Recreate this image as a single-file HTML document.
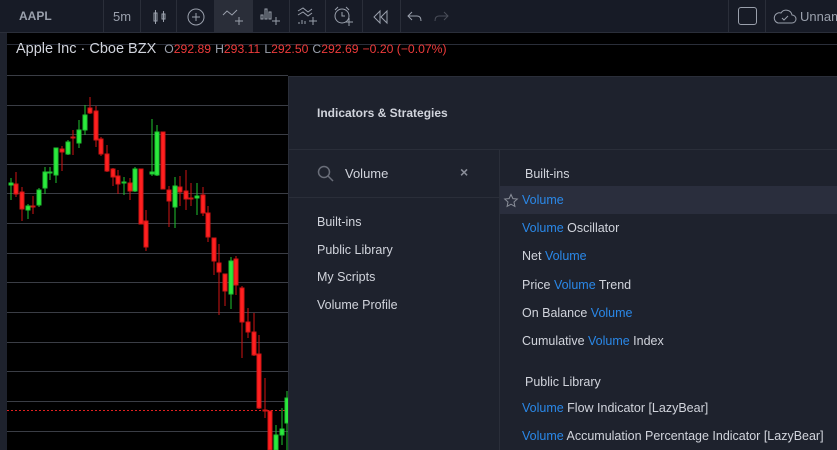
<!DOCTYPE html>
<html><head><meta charset="utf-8"><style>
*{margin:0;padding:0;box-sizing:border-box}
html,body{width:837px;height:450px;overflow:hidden}
body{background:#000;font-family:"Liberation Sans",sans-serif;position:relative}
.tb{position:absolute;left:0;top:0;width:837px;height:33px;background:#171b26;border-bottom:1px solid #2a2e39}
.sep{position:absolute;top:0;width:1px;height:33px;background:#2a2e39}
.tx{position:absolute;color:#9aa0ac;font-size:13px;top:9px}
.ls{position:absolute;left:0;top:33px;width:7px;height:417px;background:#1e222d}
.leg{position:absolute;left:16px;top:41px;font-size:14.5px;color:#d1d4dc;white-space:nowrap}
.leg .n{font-size:12.2px;color:#ef3b3b}
.leg .g{font-size:12.2px;color:#9aa0ac}
.dlg{position:absolute;left:288px;top:76px;width:549px;height:374px;background:#1e222d;border-left:1px solid #2a2e39;border-top:1px solid #2a2e39;overflow:hidden}
.t{position:absolute;color:#d1d4dc;font-size:12.5px;white-space:nowrap}
.b{color:#2a88e8}
</style></head><body>
<div class="tb">
<span class="tx" style="left:19px;font-weight:bold;font-size:12px">AAPL</span>
<div class="sep" style="left:103px"></div>
<span class="tx" style="left:113px">5m</span>
<div class="sep" style="left:140px"></div>
<svg style="position:absolute;left:150px;top:7px" width="20" height="20" stroke="#9aa0ac" fill="none"><rect x="4" y="6" width="3" height="8"/><line x1="5.5" y1="3" x2="5.5" y2="17"/><rect x="12" y="7" width="3" height="5"/><line x1="13.5" y1="4" x2="13.5" y2="15"/></svg>
<div class="sep" style="left:176px"></div>
<svg style="position:absolute;left:185px;top:6px" width="22" height="22" stroke="#9aa0ac" fill="none"><circle cx="11" cy="11" r="8"/><line x1="11" y1="7" x2="11" y2="15"/><line x1="7" y1="11" x2="15" y2="11"/></svg>
<div class="sep" style="left:214px"></div>
<div style="position:absolute;left:215px;top:0;width:37px;height:33px;background:#2a2e39"></div>
<svg style="position:absolute;left:222px;top:6px" width="24" height="22" stroke="#9aa0ac" fill="none"><path d="M1 9 L5 5 L10 9 L15 4"/><line x1="17" y1="11" x2="17" y2="19"/><line x1="13" y1="15" x2="21" y2="15"/></svg>
<div class="sep" style="left:252px"></div>
<svg style="position:absolute;left:259px;top:6px" width="24" height="22" stroke="#9aa0ac" fill="none"><rect x="2" y="9" width="2" height="4"/><rect x="6" y="3" width="2" height="10"/><rect x="10" y="6" width="2" height="7"/><line x1="17" y1="11" x2="17" y2="19"/><line x1="13" y1="15" x2="21" y2="15"/></svg>
<div class="sep" style="left:289px"></div>
<svg style="position:absolute;left:296px;top:6px" width="24" height="22" stroke="#9aa0ac" fill="none"><path d="M2 5 L7 2 L12 6 L16 3"/><path d="M2 9 L7 6 L12 10 L16 7"/><line x1="3" y1="16" x2="3" y2="18"/><line x1="6" y1="14" x2="6" y2="18"/><line x1="9" y1="15" x2="9" y2="18"/><line x1="17" y1="11" x2="17" y2="19"/><line x1="13" y1="15" x2="21" y2="15"/></svg>
<div class="sep" style="left:325px"></div>
<svg style="position:absolute;left:332px;top:5px" width="24" height="22" stroke="#9aa0ac" fill="none"><circle cx="10" cy="11" r="7"/><path d="M10 7 V11 H13"/><path d="M3 5 L6 2 M17 5 L14 2"/><line x1="17" y1="13" x2="17" y2="21"/><line x1="13" y1="17" x2="21" y2="17"/></svg>
<div class="sep" style="left:362px"></div>
<svg style="position:absolute;left:372px;top:8px" width="20" height="18" stroke="#9aa0ac" fill="none"><path d="M8 3 L2 9 L8 15 Z"/><path d="M15 3 L9 9 L15 15 Z"/></svg>
<div class="sep" style="left:400px"></div>
<svg style="position:absolute;left:406px;top:8px" width="20" height="18" stroke="#9aa0ac" fill="none"><path d="M6 4 L2 8 L6 12"/><path d="M2 8 H11 Q15 8 15 13"/></svg>
<svg style="position:absolute;left:432px;top:8px" width="20" height="18" stroke="#4a4e59" fill="none"><path d="M12 4 L16 8 L12 12"/><path d="M16 8 H7 Q3 8 3 13"/></svg>
<div class="sep" style="left:728px"></div>
<div style="position:absolute;left:738px;top:7px;width:19px;height:18px;border:1.5px solid #9aa0ac;border-radius:3px"></div>
<div class="sep" style="left:765px"></div>
<svg style="position:absolute;left:772px;top:7px" width="26" height="20" stroke="#9aa0ac" fill="none"><path d="M6 16 H20 A4 4 0 0 0 20 8 A6 6 0 0 0 9 6 A5 5 0 0 0 6 16 Z"/><path d="M10 11 L12 13 L16 9"/></svg>
<span class="tx" style="left:800px;font-size:13px;width:37px;overflow:hidden;white-space:nowrap">Unnamed</span>
</div>
<div class="ls"></div>
<div style="position:absolute;left:7px;top:44px;width:830px;height:1px;background:#2a2e39"></div>
<svg style="position:absolute;left:0;top:0;overflow:hidden" width="288" height="450" viewBox="0 0 288 450">
<g stroke="#3a3d45" stroke-width="1">
<line x1="7" y1="75.5" x2="288" y2="75.5"/><line x1="7" y1="105.5" x2="288" y2="105.5"/><line x1="7" y1="134.5" x2="288" y2="134.5"/><line x1="7" y1="164.5" x2="288" y2="164.5"/><line x1="7" y1="193.5" x2="288" y2="193.5"/><line x1="7" y1="223.5" x2="288" y2="223.5"/><line x1="7" y1="253.5" x2="288" y2="253.5"/><line x1="7" y1="282.5" x2="288" y2="282.5"/><line x1="7" y1="312.5" x2="288" y2="312.5"/><line x1="7" y1="342.5" x2="288" y2="342.5"/><line x1="7" y1="371.5" x2="288" y2="371.5"/><line x1="7" y1="401.5" x2="288" y2="401.5"/><line x1="7" y1="431.5" x2="288" y2="431.5"/>
</g>
<line x1="7" y1="410.5" x2="288" y2="410.5" stroke="#e02020" stroke-dasharray="2,2"/>
<g transform="translate(0,70)">
<g stroke="#1fc431" fill="#2bea3d">
<line x1="11" y1="108" x2="11" y2="130"/><rect x="9" y="113" width="4" height="2"/>
<line x1="28" y1="134" x2="28" y2="149"/><rect x="26" y="136" width="4" height="4"/>
<line x1="39" y1="118" x2="39" y2="137"/><rect x="37" y="120" width="4" height="15"/>
<line x1="45" y1="97" x2="45" y2="124"/><rect x="43" y="102" width="4" height="16"/>
<line x1="50" y1="97" x2="50" y2="110"/><rect x="48" y="102" width="4" height="1"/>
<line x1="56" y1="78" x2="56" y2="113"/><rect x="54" y="78" width="4" height="27"/>
<line x1="68" y1="70" x2="68" y2="85"/><rect x="66" y="72" width="4" height="12"/>
<line x1="79" y1="50" x2="79" y2="78"/><rect x="77" y="60" width="4" height="13"/>
<line x1="85" y1="35" x2="85" y2="65"/><rect x="83" y="45" width="4" height="15"/>
<line x1="124" y1="107" x2="124" y2="125"/><rect x="122" y="112" width="4" height="1"/>
<line x1="135" y1="97" x2="135" y2="122"/><rect x="133" y="99" width="4" height="22"/>
<line x1="152" y1="49" x2="152" y2="106"/><rect x="150" y="102" width="4" height="2"/>
<line x1="157" y1="55" x2="157" y2="106"/><rect x="155" y="62" width="4" height="43"/>
<line x1="175" y1="107" x2="175" y2="158"/><rect x="173" y="116" width="4" height="21"/>
<line x1="197" y1="113" x2="197" y2="145"/><rect x="195" y="126" width="4" height="2"/>
<line x1="231" y1="187" x2="231" y2="239"/><rect x="229" y="191" width="4" height="33"/>
<line x1="276" y1="355" x2="276" y2="380"/><rect x="274" y="365" width="4" height="15"/>
<line x1="282" y1="338" x2="282" y2="375"/><rect x="280" y="359" width="4" height="6"/>
<line x1="287" y1="321" x2="287" y2="380"/><rect x="285" y="328" width="4" height="25"/>
</g>
<g stroke="#d01515" fill="#ff2020">
<line x1="16" y1="102" x2="16" y2="127"/><rect x="14" y="114" width="4" height="10"/>
<line x1="22" y1="117" x2="22" y2="151"/><rect x="20" y="122" width="4" height="17"/>
<line x1="33" y1="126" x2="33" y2="144"/><rect x="31" y="136" width="4" height="1"/>
<line x1="62" y1="76" x2="62" y2="101"/><rect x="60" y="79" width="4" height="3"/>
<line x1="73" y1="60" x2="73" y2="85"/><rect x="71" y="67" width="4" height="1"/>
<line x1="90" y1="27" x2="90" y2="44"/><rect x="88" y="38" width="4" height="5"/>
<line x1="96" y1="36" x2="96" y2="77"/><rect x="94" y="41" width="4" height="29"/>
<line x1="101" y1="67" x2="101" y2="86"/><rect x="99" y="69" width="4" height="15"/>
<line x1="107" y1="75" x2="107" y2="102"/><rect x="105" y="84" width="4" height="17"/>
<line x1="113" y1="98" x2="113" y2="116"/><rect x="111" y="99" width="4" height="8"/>
<line x1="118" y1="100" x2="118" y2="124"/><rect x="116" y="106" width="4" height="8"/>
<line x1="130" y1="108" x2="130" y2="130"/><rect x="128" y="113" width="4" height="8"/>
<rect x="139" y="99" width="4" height="55"/>
<line x1="146" y1="140" x2="146" y2="181"/><rect x="144" y="151" width="4" height="26"/>
<rect x="161" y="62" width="4" height="57"/>
<line x1="169" y1="116" x2="169" y2="157"/><rect x="167" y="120" width="4" height="11"/>
<line x1="180" y1="106" x2="180" y2="136"/><rect x="178" y="117" width="4" height="5"/>
<line x1="186" y1="100" x2="186" y2="140"/><rect x="184" y="121" width="4" height="8"/>
<line x1="191" y1="113" x2="191" y2="136"/><rect x="189" y="128" width="4" height="1"/>
<line x1="203" y1="117" x2="203" y2="146"/><rect x="201" y="125" width="4" height="18"/>
<line x1="208" y1="136" x2="208" y2="172"/><rect x="206" y="143" width="4" height="24"/>
<line x1="214" y1="168" x2="214" y2="205"/><rect x="212" y="168" width="4" height="23"/>
<line x1="219" y1="174" x2="219" y2="245"/><rect x="217" y="193" width="4" height="9"/>
<line x1="225" y1="204" x2="225" y2="236"/><rect x="223" y="204" width="4" height="17"/>
<line x1="236" y1="186" x2="236" y2="225"/><rect x="234" y="189" width="4" height="26"/>
<line x1="242" y1="216" x2="242" y2="288"/><rect x="240" y="218" width="4" height="34"/>
<line x1="248" y1="238" x2="248" y2="268"/><rect x="246" y="252" width="4" height="10"/>
<line x1="254" y1="243" x2="254" y2="286"/><rect x="252" y="262" width="4" height="23"/>
<line x1="259" y1="265" x2="259" y2="339"/><rect x="257" y="284" width="4" height="54"/>
<line x1="265" y1="308" x2="265" y2="348"/><rect x="263" y="340" width="4" height="1"/>
<rect x="268" y="341" width="4" height="39"/>
</g>
</g>
</svg>
<div class="leg">Apple Inc · Cboe BZX &nbsp;<span class="g">O</span><span class="n">292.89</span> <span class="g">H</span><span class="n">293.11</span> <span class="g">L</span><span class="n">292.50</span> <span class="g">C</span><span class="n">292.69</span> <span class="n">−0.20 (−0.07%)</span></div>
<div class="dlg">
<div class="t" style="left:28px;top:29px;font-weight:bold;font-size:12px">Indicators &amp; Strategies</div>
<div style="position:absolute;left:0;top:72px;width:549px;height:1px;background:#2a2e39"></div>
<div style="position:absolute;left:210px;top:73px;width:1px;height:300px;background:#2a2e39"></div>
<div style="position:absolute;left:0;top:120px;width:210px;height:1px;background:#2a2e39"></div>
<svg style="position:absolute;left:28px;top:88px" width="18" height="18" stroke="#6a6e79" fill="none" stroke-width="1.5"><circle cx="7" cy="7" r="5.5"/><line x1="11" y1="11" x2="16" y2="16"/></svg>
<div class="t" style="left:56px;top:89px;font-size:13px">Volume</div>
<div class="t" style="left:171px;top:87px;font-size:14px;color:#8a8e99;font-weight:bold">×</div>
<div class="t" style="left:28px;top:138px">Built-ins</div>
<div class="t" style="left:28px;top:166px">Public Library</div>
<div class="t" style="left:28px;top:193px">My Scripts</div>
<div class="t" style="left:28px;top:221px">Volume Profile</div>
<div class="t" style="left:236px;top:90px">Built-ins</div>
<div style="position:absolute;left:211px;top:109px;width:338px;height:28px;background:#2a2e3d"></div>
<svg style="position:absolute;left:214px;top:116px" width="16" height="15" stroke="#8a8e99" fill="none"><path d="M8 1.5 L9.9 5.6 L14.3 6 L11 9 L11.9 13.4 L8 11.2 L4.1 13.4 L5 9 L1.7 6 L6.1 5.6 Z"/></svg>
<div class="t b" style="left:233px;top:116px">Volume</div>
<div class="t" style="left:233px;top:144px"><span class="b">Volume</span> Oscillator</div>
<div class="t" style="left:233px;top:172px">Net <span class="b">Volume</span></div>
<div class="t" style="left:233px;top:201px">Price <span class="b">Volume</span> Trend</div>
<div class="t" style="left:233px;top:229px">On Balance <span class="b">Volume</span></div>
<div class="t" style="left:233px;top:257px">Cumulative <span class="b">Volume</span> Index</div>
<div class="t" style="left:236px;top:298px">Public Library</div>
<div class="t" style="left:233px;top:324px"><span class="b">Volume</span> Flow Indicator [LazyBear]</div>
<div class="t" style="left:233px;top:352px"><span class="b">Volume</span> Accumulation Percentage Indicator [LazyBear]</div>
</div>
</body></html>
